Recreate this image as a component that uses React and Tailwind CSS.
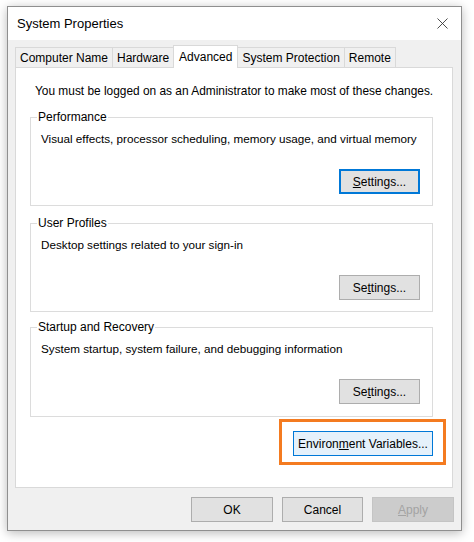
import React from "react";
import { X } from "lucide-react";

const font = { fontFamily: '"Liberation Sans", Arial, sans-serif' };

function Tab({ label, active }) {
  if (active) {
    return (
      <div className="h-[23px] px-[5px] flex items-center bg-white border border-[#d9d9d9] border-b-0 -mb-px -ml-px relative z-10 text-[12px] whitespace-nowrap">
        {label}
      </div>
    );
  }
  return (
    <div className="h-[20px] px-[4px] flex items-center bg-[#f0f0f0] border border-[#d9d9d9] border-b-0 -ml-px first:ml-0 text-[12px] whitespace-nowrap">
      {label}
    </div>
  );
}

function WinButton({ children, focused, primary, disabled, className = "" }) {
  let look = "bg-[#e1e1e1] border border-[#adadad] text-black";
  if (focused) look = "bg-[#e1e1e1] border-2 border-[#0078d7] text-black";
  if (primary) look = "bg-[#e5f1fb] border border-[#0078d7] text-black";
  if (disabled) look = "bg-[#cccccc] border border-[#c4c4c4] text-[#a3a3a3]";
  return (
    <button
      type="button"
      className={`h-[25px] w-[81px] flex items-center justify-center text-[12px] whitespace-nowrap ${look} ${className}`}
    >
      {children}
    </button>
  );
}

function Group({ title, text, underline, focused, className = "" }) {
  return (
    <fieldset className={`min-w-0 border border-[#dcdcdc] px-[10px] ${className}`}>
      <legend className="-ml-[4px] px-px text-[12px] leading-[14px]">{title}</legend>
      <div className="text-[11.7px] leading-[16px] mt-[7px] whitespace-nowrap">{text}</div>
      <div className="flex justify-end mt-[22px] pr-[2px]">
        <WinButton focused={focused} className="w-[80px] h-[24px]">
          {underline === 0 ? (
            <span><u>S</u>ettings...</span>
          ) : (
            <span>Se<u>t</u>tings...</span>
          )}
        </WinButton>
      </div>
    </fieldset>
  );
}

export default function App() {
  return (
    <div className="w-[474px] h-[542px] bg-white pt-[6px] pl-[7px]" style={font}>
      <div className="w-[455px] h-[525px] border border-[#8f8f8f] shadow-[0_2px_10px_rgba(0,0,0,0.28)] flex flex-col text-black">
        {/* Title bar */}
        <div className="h-[33px] bg-white flex items-center justify-between pl-[9px] pr-[9px]">
          <span className="text-[13px]">System Properties</span>
          <X size={19} strokeWidth={1.1} className="text-[#333]" />
        </div>

        {/* Body */}
        <div className="flex-1 bg-[#f0f0f0] px-[7px] pt-[5px] flex flex-col">
          <div className="flex items-end h-[22px]">
            <Tab label="Computer Name" />
            <Tab label="Hardware" />
            <Tab label="Advanced" active />
            <Tab label="System Protection" />
            <Tab label="Remote" />
          </div>

          <div className="h-[421px] w-[438px] bg-white border border-[#d9d9d9] relative pl-[14px] pr-[19px] pt-[15px]">
            <p className="text-[11.9px] leading-[16px] pl-[5px] whitespace-nowrap">
              You must be logged on as an Administrator to make most of these changes.
            </p>

            <Group
              title="Performance"
              text="Visual effects, processor scheduling, memory usage, and virtual memory"
              underline={0}
              focused
              className="mt-[11px] h-[96px]"
            />
            <Group
              title="User Profiles"
              text="Desktop settings related to your sign-in"
              underline={2}
              className="mt-[10px] h-[96px]"
            />
            <Group
              title="Startup and Recovery"
              text="System startup, system failure, and debugging information"
              underline={2}
              className="mt-[8px] h-[97px]"
            />

            <div className="flex justify-end mt-[14px]">
              <div className="relative">
                <WinButton primary className="w-[140px] h-[24px]">
                  <span>Environ<u>m</u>ent Variables...</span>
                </WinButton>
                <div className="absolute -left-[14px] -top-[12px] -right-[13px] -bottom-[9px] border-[3px] border-[#f47b20] pointer-events-none" />
              </div>
            </div>
          </div>

          <div className="flex justify-end gap-[9px] mt-[9px]">
            <WinButton className="w-[82px]">OK</WinButton>
            <WinButton>Cancel</WinButton>
            <WinButton disabled className="w-[82px]">
              <span><u>A</u>pply</span>
            </WinButton>
          </div>
        </div>
      </div>
    </div>
  );
}
